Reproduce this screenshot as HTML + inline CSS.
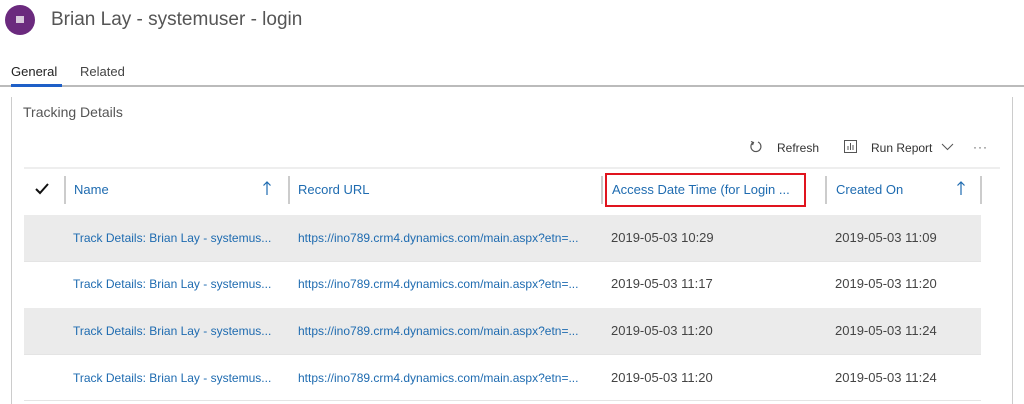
<!DOCTYPE html><html><head><style>
body{margin:0;width:1024px;height:404px;background:#fff;font-family:"Liberation Sans",sans-serif;position:relative;overflow:hidden}
.a{position:absolute;white-space:nowrap}
.lnk{color:#1e6bb0;font-size:12px}
.cell{color:#444;font-size:13px}
.sep{position:absolute;width:2px;height:28px;background:#ccc;top:176px}
.row{position:absolute;left:24px;width:957px;height:46px}
</style></head><body>
<div class="a" style="left:5px;top:5px;width:30px;height:30px;border-radius:50%;background:#6b2a7e"></div>
<div class="a" style="left:16px;top:16px;width:8px;height:7px;background:#d8c8dc"></div>
<div class="a" style="left:51px;top:9px;font-size:19px;color:#555">Brian Lay - systemuser - login</div>
<div class="a" style="left:11px;top:64px;font-size:13px;color:#222">General</div>
<div class="a" style="left:80px;top:64px;font-size:13px;color:#444">Related</div>
<div class="a" style="left:0;top:85px;width:1024px;height:2px;background:#bbb"></div>
<div class="a" style="left:11px;top:84px;width:51px;height:3px;background:#1e5fc7"></div>
<div class="a" style="left:11px;top:97px;width:1px;height:307px;background:#ccc"></div>
<div class="a" style="left:1012px;top:97px;width:1px;height:307px;background:#ccc"></div>
<div class="a" style="left:23px;top:104px;font-size:14px;color:#555">Tracking Details</div>
<svg class="a" style="left:749px;top:140px" width="14" height="14" viewBox="0 0 14 14"><path d="M4 2.5A5 5 0 1 0 9 2" fill="none" stroke="#555" stroke-width="1.2"/><path d="M2 1.5L4.5 2.5 3.5 5" fill="none" stroke="#555" stroke-width="1.2"/></svg>
<div class="a" style="left:777px;top:141px;font-size:12px;color:#333">Refresh</div>
<svg class="a" style="left:844px;top:140px" width="13" height="13" viewBox="0 0 13 13"><rect x="0.5" y="0.5" width="12" height="12" fill="none" stroke="#555"/><path d="M4 10V6M6.5 10V3M9 10V5" stroke="#555"/></svg>
<div class="a" style="left:871px;top:141px;font-size:12px;color:#333">Run Report</div>
<svg class="a" style="left:941px;top:143px" width="13" height="8" viewBox="0 0 13 8"><path d="M1 1L6.5 6.5 12 1" fill="none" stroke="#555"/></svg>
<div class="a" style="left:973px;top:140px;font-size:12px;color:#555;letter-spacing:1px">···</div>
<div class="a" style="left:24px;top:167px;width:976px;height:2px;background:#eee"></div>
<svg class="a" style="left:35px;top:183px" width="14" height="12" viewBox="0 0 14 12"><path d="M1 6L5 10 13 1" fill="none" stroke="#111" stroke-width="2"/></svg>
<div class="sep" style="left:64px"></div>
<div class="a lnk" style="left:74px;top:182px;font-size:13px">Name</div>
<svg class="a" style="left:263px;top:181px" width="8" height="14" viewBox="0 0 8 14"><path d="M4 1V14M0.5 4.5L4 1 7.5 4.5" fill="none" stroke="#1e6bb0" stroke-width="1.2"/></svg>
<div class="sep" style="left:288px"></div>
<div class="a lnk" style="left:298px;top:182px;font-size:13px">Record URL</div>
<div class="sep" style="left:601px"></div>
<div class="a" style="left:605px;top:173px;width:201px;height:34px;border:2px solid #e0141e;box-sizing:border-box"></div>
<div class="a lnk" style="left:612px;top:182px;font-size:13px">Access Date Time (for Login ...</div>
<div class="sep" style="left:825px"></div>
<div class="a lnk" style="left:836px;top:182px;font-size:13px">Created On</div>
<svg class="a" style="left:957px;top:181px" width="8" height="14" viewBox="0 0 8 14"><path d="M4 1V14M0.5 4.5L4 1 7.5 4.5" fill="none" stroke="#1e6bb0" stroke-width="1.2"/></svg>
<div class="sep" style="left:980px"></div>
<div class="row" style="top:215px;background:#ebebeb"></div>
<div class="row" style="top:308px;background:#ebebeb"></div>
<div class="a" style="left:24px;top:261px;width:957px;height:1px;background:#e4e4e4"></div>
<div class="a" style="left:24px;top:354px;width:957px;height:1px;background:#e4e4e4"></div>
<div class="a" style="left:24px;top:400px;width:957px;height:1px;background:#e4e4e4"></div>
<div class="a lnk" style="left:73px;top:231px">Track Details: Brian Lay - systemus...</div>
<div class="a lnk" style="left:298px;top:231px">https://ino789.crm4.dynamics.com/main.aspx?etn=...</div>
<div class="a cell" style="left:611px;top:230px">2019-05-03 10:29</div>
<div class="a cell" style="left:835px;top:230px">2019-05-03 11:09</div>
<div class="a lnk" style="left:73px;top:277px">Track Details: Brian Lay - systemus...</div>
<div class="a lnk" style="left:298px;top:277px">https://ino789.crm4.dynamics.com/main.aspx?etn=...</div>
<div class="a cell" style="left:611px;top:276px">2019-05-03 11:17</div>
<div class="a cell" style="left:835px;top:276px">2019-05-03 11:20</div>
<div class="a lnk" style="left:73px;top:324px">Track Details: Brian Lay - systemus...</div>
<div class="a lnk" style="left:298px;top:324px">https://ino789.crm4.dynamics.com/main.aspx?etn=...</div>
<div class="a cell" style="left:611px;top:323px">2019-05-03 11:20</div>
<div class="a cell" style="left:835px;top:323px">2019-05-03 11:24</div>
<div class="a lnk" style="left:73px;top:371px">Track Details: Brian Lay - systemus...</div>
<div class="a lnk" style="left:298px;top:371px">https://ino789.crm4.dynamics.com/main.aspx?etn=...</div>
<div class="a cell" style="left:611px;top:370px">2019-05-03 11:20</div>
<div class="a cell" style="left:835px;top:370px">2019-05-03 11:24</div>
</body></html>
